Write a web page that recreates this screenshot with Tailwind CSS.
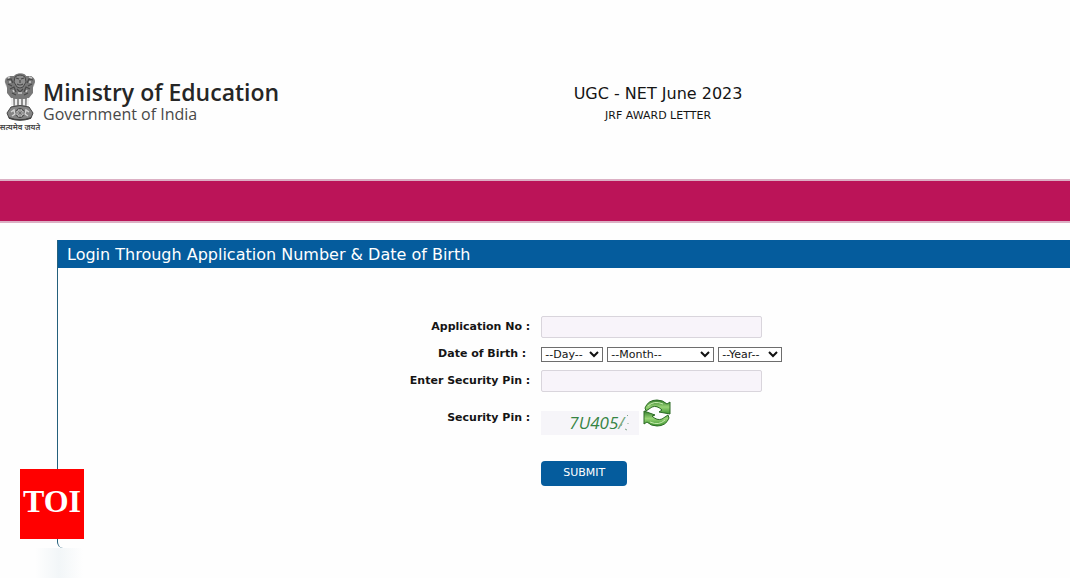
<!DOCTYPE html>
<html lang="en">
<head>
  <meta charset="utf-8">
  <title>UGC - NET June 2023</title>
  <meta name="viewport" content="width=device-width, initial-scale=1">
  <script src="https://cdn.jsdelivr.net/npm/@tailwindcss/browser@4"></script>
</head>
<body class="relative min-h-screen overflow-x-hidden bg-[#fefefe] font-['DejaVu_Sans',Verdana,sans-serif] text-[11px] text-[#151515]">
  <header class="flex h-[179px] items-start pt-[72px]">
    <div class="flex w-1/2 items-start">
      <div class="flex w-10 shrink-0 flex-col items-center">
        <svg class="h-[50px] w-8" viewBox="0 0 32 50" fill="none" aria-hidden="true">
          <path d="M10 4Q12 1 16 1.500Q21 1 22 4L27 4Q31 6 31 10L30 14Q28 16 28 19Q27 24 23 25L22 34L25 35L27 39L26 46L23 48H9L6 46L5 39L7 35L10 34L9 25Q4 24 4 18L2 14Q0 10 1 7Q3 4 7 4Z" fill="#b4b4b4"/>
          <path d="M10 4Q12 1 16 1.500Q21 1 22 4L27 4Q31 6 31 10L29 14L29 21L25 26L20 27H12L7 26L3 21L3 14L1 10Q1 6 6 4Z" fill="#787878"/>
          <path d="M11 5Q16 1 21 5L22 10L19 15Q16 17 13 15L10 10Z" fill="#8f8f8f" stroke="#484848"/>
          <path d="M12 6L15 7M20 6L17 7M16 8V11M13 12Q16 14 19 12M3 8L7 7L9 11M29 8L25 7L23 11M4 12L8 14M28 12L24 14M6 17L10 15L12 20M26 17L22 15L20 20M13 17L16 20L19 17M8 21L12 23M24 21L20 23" stroke="#484848" stroke-width="1.200"/>
          <path d="M4 6L6 5M25 5L28 6M5 10L7 10M25 10L27 10M9 18L10 20M22 20L23 18M14 21H18" stroke="#c9c9c9" stroke-width="1.500"/>
          <path d="M8 26L8 33M12 27V33M16 27V33M20 27V33M24 26L24 33" stroke="#ededed" stroke-width="2"/>
          <path d="M10 26V34M14 27V34M18 27V34M22 26V34" stroke="#666" stroke-width="1"/>
          <path d="M7 35Q16 32 25 35L29 41L27 46Q16 50 5 46L3 41Z" fill="#858585" stroke="#444"/>
          <circle cx="16" cy="41" r="4.500" fill="#b8b8b8" stroke="#444"/>
          <path d="M16 37V45M12 41H20M13 38L19 44M19 38L13 44" stroke="#666" stroke-width=".7"/>
          <path d="M7 40L10 38L11 42L8 44M25 40L22 38L21 42L24 44" stroke="#d5d5d5" stroke-width="1.500"/>
          <path d="M5 46Q16 50 27 46" stroke="#444" stroke-width="1.500"/>
        </svg>
        <span class="whitespace-nowrap font-['Noto_Sans',sans-serif] text-[8px]/[9px] font-semibold text-[#444]">सत्यमेव जयते</span>
      </div>
      <div class="pl-[3px] pt-[7px] font-['Open_Sans',sans-serif]">
        <h1 class="whitespace-nowrap text-[23px]/[26px] font-semibold text-[#262626]">Ministry of Education</h1>
        <p class="text-base/[18px] text-[#484848]">Government of India</p>
      </div>
    </div>
    <div class="w-[23%] pt-3 text-center">
      <h2 class="whitespace-nowrap text-base/5">UGC - NET June 2023</h2>
      <p class="pt-1 text-[11px]/4">JRF AWARD LETTER</p>
    </div>
  </header>

  <div class="h-11 border-y-2 border-[#dcb0c4] bg-[#bb1458]"></div>

  <main class="ml-[57px] mt-[17px]">
    <section class="rounded-bl-md border-l border-[#24607c]">
      <h2 class="h-7 bg-[#055c9d] pl-[9px] text-base/[29px] text-white">Login Through Application Number &amp; Date of Birth</h2>
      <form class="grid min-h-[280px] grid-cols-[7fr_8fr] content-start items-center gap-y-[5px] pt-12">
        <label for="app-no" class="text-right font-bold">Application No :</label>
        <input id="app-no" type="text" class="ml-[11px] h-[22px] w-[221px] rounded-xs border border-[#d9d5dc] bg-[#f8f4fa] px-1">

        <label for="day" class="pr-1 text-right font-bold">Date of Birth :</label>
        <div class="ml-[11px] flex h-[22px] items-center gap-1">
          <div class="relative flex">
            <select id="day" class="h-[15px] w-[62px] appearance-none border border-[#6d6d6d] bg-white pl-[3px] text-[11px]/[13px]">
              <option>--Day--</option>
            </select>
            <svg class="pointer-events-none absolute right-1 top-1 h-[7px] w-[10px]" viewBox="0 0 10 7" fill="none" stroke="#111" stroke-width="2"><path d="M1 1L5 5L9 1"/></svg>
          </div>
          <div class="relative flex">
            <select aria-label="Month" class="h-[15px] w-[107px] appearance-none border border-[#6d6d6d] bg-white pl-[3px] text-[11px]/[13px]">
              <option>--Month--</option>
            </select>
            <svg class="pointer-events-none absolute right-1 top-1 h-[7px] w-[10px]" viewBox="0 0 10 7" fill="none" stroke="#111" stroke-width="2"><path d="M1 1L5 5L9 1"/></svg>
          </div>
          <div class="relative flex">
            <select aria-label="Year" class="h-[15px] w-[64px] appearance-none border border-[#6d6d6d] bg-white pl-[3px] text-[11px]/[13px]">
              <option>--Year--</option>
            </select>
            <svg class="pointer-events-none absolute right-1 top-1 h-[7px] w-[10px]" viewBox="0 0 10 7" fill="none" stroke="#111" stroke-width="2"><path d="M1 1L5 5L9 1"/></svg>
          </div>
        </div>

        <label for="pin" class="text-right font-bold">Enter Security Pin :</label>
        <input id="pin" type="text" class="ml-[11px] h-[22px] w-[221px] rounded-xs border border-[#d9d5dc] bg-[#f8f4fa] px-1">

        <span class="pt-1 text-right font-bold">Security Pin :</span>
        <div class="ml-[11px] flex h-[38px] items-end gap-1">
          <div class="relative h-6 w-[98px] bg-[#f6f5f9] pl-7 font-['Open_Sans',sans-serif] text-[17px]/6 font-medium italic text-[#368443]">7U405<span class="text-[#6fa479]">/</span>
            <svg class="absolute right-2 top-0 h-6 w-3" viewBox="0 0 12 24" fill="none" stroke="#82a58a" aria-hidden="true"><path d="M3 13L2 15M8 4L9 5M6 18L8 19M9 12V13"/></svg>
          </div>
          <button type="button" aria-label="Refresh security pin" class="mb-2 cursor-pointer">
            <svg class="h-7 w-7" viewBox="0 0 28 28" stroke="#2c6b25" stroke-linejoin="round">
              <defs>
                <linearGradient id="leaf" x1="0" y1="0" x2="0" y2="1">
                  <stop offset="0" stop-color="#347e2b"/>
                  <stop offset=".5" stop-color="#98d375"/>
                  <stop offset="1" stop-color="#3c9430"/>
                </linearGradient>
              </defs>
              <path fill="url(#leaf)" d="M2 9Q5 1 14 1Q20 1 24 5L27 3V15L16 13L19 11Q14 6 9 8L3 12Z"/>
              <path fill="url(#leaf)" d="M26 19Q23 27 14 27Q8 27 4 23L1 25V12L12 16L9 17Q14 22 19 20L25 16Z"/>
              <path fill="none" stroke="#c5e9ac" d="M5 7Q11 1 20 5M7 23Q16 27 22 21"/>
            </svg>
          </button>
        </div>

        <div class="col-start-2 ml-[11px] pt-[21px]">
          <button type="submit" class="h-[25px] w-[86px] cursor-pointer rounded-sm bg-[#055c9d] text-[11px] text-white">SUBMIT</button>
        </div>
      </form>
    </section>
  </main>

  <div class="absolute left-[35px] top-[548px] h-[30px] w-12 bg-linear-to-r from-transparent via-[#f2f6f8] to-transparent"></div>
  <div class="absolute left-5 top-[469px] flex h-[70px] w-16 items-center justify-center bg-[#ff0000] pb-1.5 font-['Liberation_Serif',serif] text-[32px]/8 font-bold text-white">TOI</div>
</body>
</html>
